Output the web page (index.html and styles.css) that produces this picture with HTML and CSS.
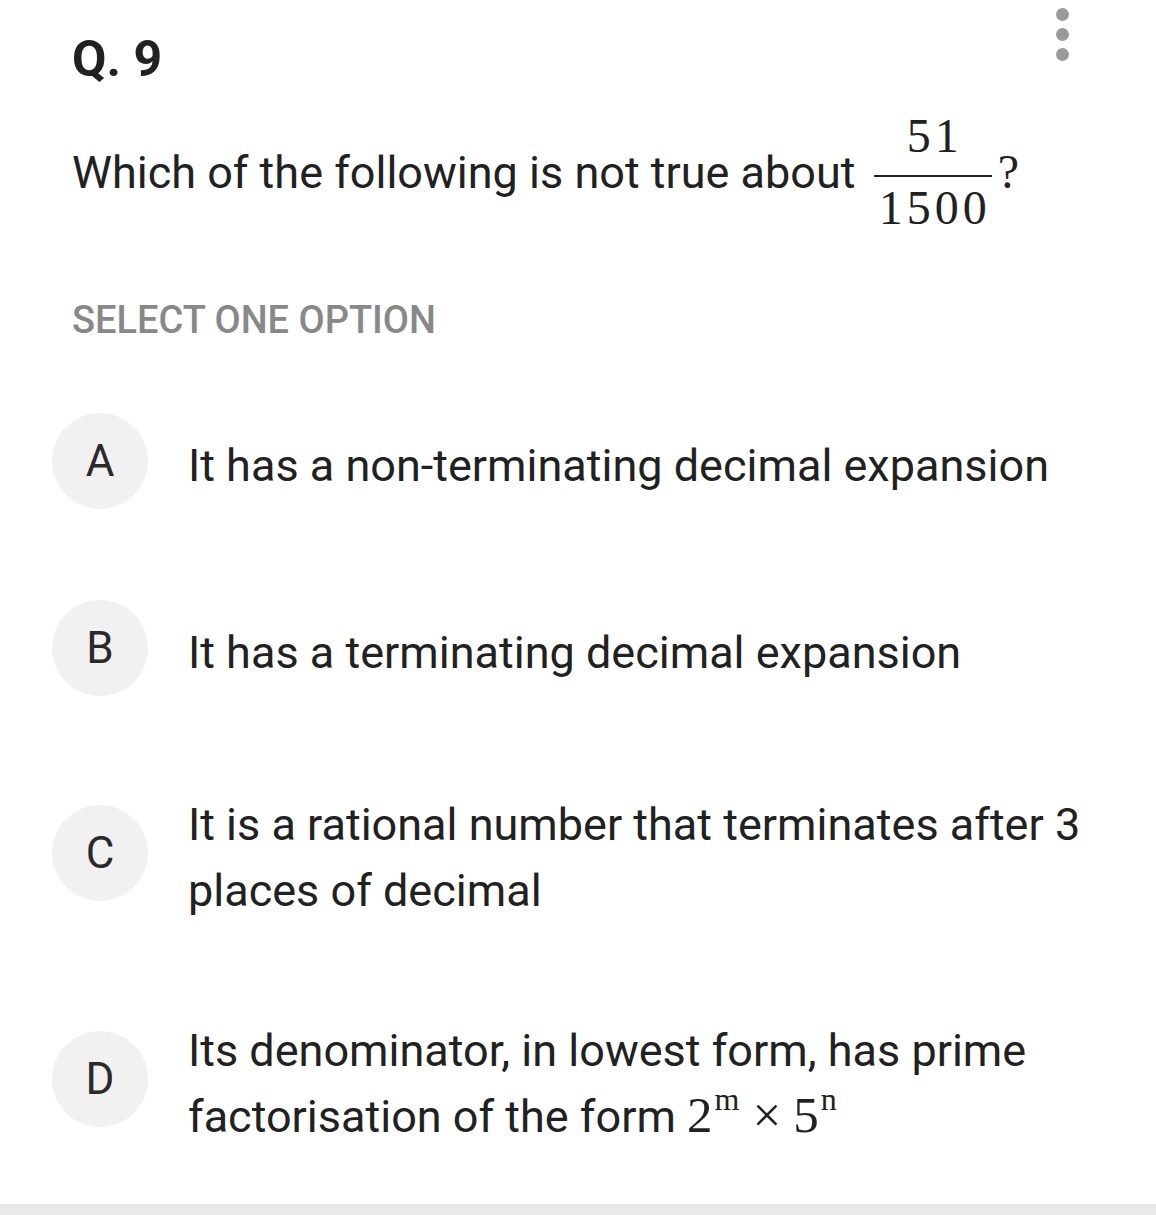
FILE: index.html
```html
<!DOCTYPE html>
<html>
<head>
<meta charset="utf-8">
<link rel="stylesheet" href="styles.css">
</head>
<body>
<div class="page">
  <header class="header">
    <h1 class="qnum">Q. 9</h1>
    <div class="menu" aria-label="More options">
      <span class="dot"></span><span class="dot"></span><span class="dot"></span>
    </div>
  </header>

  <p class="question">Which of the following is not true about <span class="frac"><span class="num">51</span><span class="den">1500</span></span><span class="qmark">?</span></p>

  <div class="select-label">SELECT ONE OPTION</div>

  <ul class="options">
    <li class="option">
      <span class="badge">A</span>
      <span class="opt-text">It has a non-terminating decimal expansion</span>
    </li>
    <li class="option option-b">
      <span class="badge">B</span>
      <span class="opt-text">It has a terminating decimal expansion</span>
    </li>
    <li class="option option-c">
      <span class="badge">C</span>
      <span class="opt-text">It is a rational number that terminates after 3 places of decimal</span>
    </li>
    <li class="option option-d">
      <span class="badge">D</span>
      <span class="opt-text">Its denominator, in lowest form, has prime factorisation of the form <span class="math">2<sup class="sup">m</sup><span class="times">×</span>5<sup class="sup">n</sup></span></span>
    </li>
  </ul>

  <div class="footer-bar"></div>
</div>
</body>
</html>
```

FILE: styles.css
```css
html, body {
  margin: 0;
  padding: 0;
  background: #ffffff;
}

.page {
  min-height: 100vh;
  display: flex;
  flex-direction: column;
  font-family: Roboto, "Liberation Sans", Arial, sans-serif;
  color: #212121;
}

.header {
  display: flex;
  justify-content: space-between;
  align-items: flex-start;
  padding: 0 87px 0 72px;
}

.qnum {
  margin: 23px 0 0 0;
  font-size: 50px;
  line-height: 72px;
  font-weight: 700;
  color: #212121;
}

.menu {
  margin-top: 8px;
  display: flex;
  flex-direction: column;
  gap: 7px;
}

.dot {
  width: 13px;
  height: 13px;
  border-radius: 50%;
  background: #999999;
}

.question {
  margin: 17px 0 0 0;
  padding: 0 72px;
  font-size: 45px;
  line-height: 66px;
}

.frac {
  display: inline-flex;
  flex-direction: column;
  align-items: stretch;
  vertical-align: middle;
  margin-left: 7px;
  font-family: "Liberation Serif", "Times New Roman", serif;
  font-size: 48px;
  line-height: 48px;
  text-align: center;
  letter-spacing: 4px;
}

.num {
  display: block;
  padding: 0 1px 15px 5px;
  border-bottom: 2px solid #222222;
}

.den {
  display: block;
  padding: 7px 1px 8px 5px;
}

.qmark {
  font-family: "Liberation Serif", "Times New Roman", serif;
  font-size: 48px;
  margin-left: 6px;
}

.select-label {
  margin-top: 53px;
  padding: 0 72px;
  font-size: 38px;
  line-height: 54px;
  font-weight: 500;
  color: #888888;
}

.options {
  list-style: none;
  margin: 66px 0 0 0;
  padding: 0 40px 0 52px;
  display: flex;
  flex-direction: column;
}

.option {
  display: flex;
  align-items: center;
  gap: 40px;
}

.option-b {
  margin-top: 91px;
}

.option-c {
  margin-top: 86px;
}

.option-d {
  margin-top: 84px;
}

.badge {
  flex: none;
  width: 96px;
  height: 96px;
  border-radius: 50%;
  background: #f1f1f1;
  display: flex;
  align-items: center;
  justify-content: center;
  font-size: 44px;
  color: #2a2a2a;
}

.opt-text {
  padding-top: 10px;
  font-size: 45px;
  line-height: 66px;
  color: #212121;
}

.math {
  font-family: "Liberation Serif", "Times New Roman", serif;
  font-size: 51px;
  line-height: 0;
  white-space: nowrap;
}

.sup {
  font-size: 32px;
  line-height: 0;
  vertical-align: 22px;
  margin-left: 2px;
}

.times {
  margin: 0 12px 0 13px;
  font-size: 51px;
}

.footer-bar {
  margin-top: auto;
  height: 10px;
  background: #e9e9e9;
  border-top: 1px solid #e2e2e2;
}
```
